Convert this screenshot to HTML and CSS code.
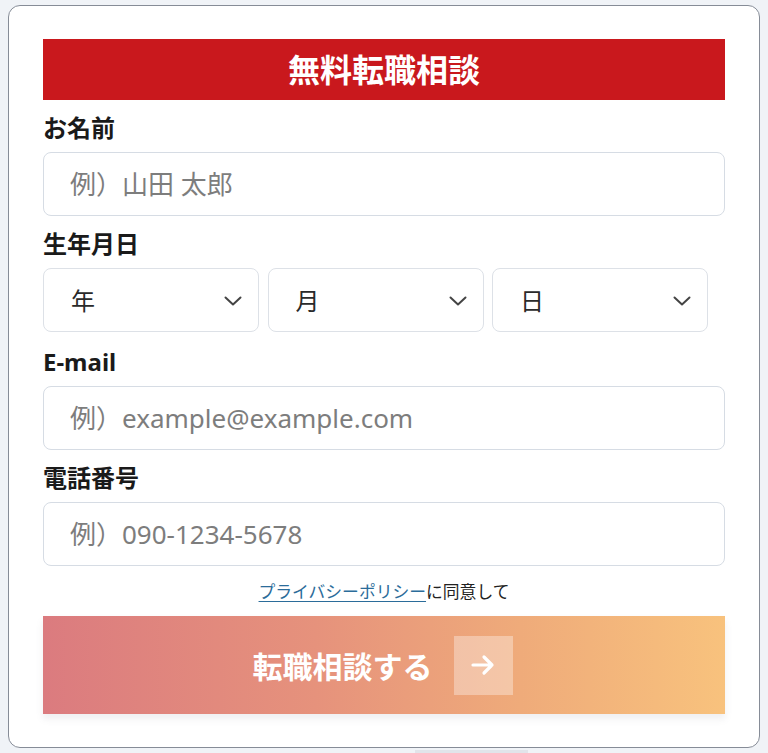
FILE: index.html
```html
<!DOCTYPE html>
<html lang="ja">
<head>
<meta charset="utf-8">
<title>無料転職相談</title>
<link rel="stylesheet" href="styles.css">
</head>
<body>
<div class="card">
  <h1 class="title">無料転職相談</h1>
  <form class="form">
    <label class="label" for="name">お名前</label>
    <input class="input" id="name" type="text" placeholder="例）山田 太郎">

    <div class="label">生年月日</div>
    <div class="selects">
      <div class="select-wrap">
        <select class="select"><option>年</option></select>
        <svg class="chev" viewBox="0 0 18 10" width="18" height="10"><path d="M1.5 1.5 L9 8.5 L16.5 1.5" fill="none" stroke="#444" stroke-width="2" stroke-linecap="round" stroke-linejoin="round"/></svg>
      </div>
      <div class="select-wrap">
        <select class="select"><option>月</option></select>
        <svg class="chev" viewBox="0 0 18 10" width="18" height="10"><path d="M1.5 1.5 L9 8.5 L16.5 1.5" fill="none" stroke="#444" stroke-width="2" stroke-linecap="round" stroke-linejoin="round"/></svg>
      </div>
      <div class="select-wrap">
        <select class="select"><option>日</option></select>
        <svg class="chev" viewBox="0 0 18 10" width="18" height="10"><path d="M1.5 1.5 L9 8.5 L16.5 1.5" fill="none" stroke="#444" stroke-width="2" stroke-linecap="round" stroke-linejoin="round"/></svg>
      </div>
    </div>

    <label class="label label-mail" for="mail">E-mail</label>
    <input class="input" id="mail" type="email" placeholder="例）example@example.com">

    <label class="label" for="tel">電話番号</label>
    <input class="input" id="tel" type="tel" placeholder="例）090-1234-5678">

    <p class="agree"><a href="#" class="agree-link">プライバシーポリシー</a>に同意して</p>

    <button type="button" class="submit">
      <span class="submit-text">転職相談する</span>
      <span class="submit-icon">
        <svg viewBox="0 0 24 22" width="24" height="22"><path d="M2 11 H21 M13 3 L21 11 L13 19" fill="none" stroke="#fff" stroke-width="3.2" stroke-linecap="round" stroke-linejoin="round"/></svg>
      </span>
    </button>
  </form>
</div>
<div class="bottom-tab"></div>
</body>
</html>
```
FILE: styles.css
```css
* { box-sizing: border-box; }
html, body { margin: 0; padding: 0; }
body {
  background: #f0f3f7;
  font-family: "Noto Sans", "Noto Sans CJK JP", sans-serif;
  color: #1a1a1a;
  height: 753px;
  overflow: hidden;
}
.card {
  margin: 5px 8px 0 8px;
  width: 752px;
  height: 743px;
  background: #fff;
  border: 1.5px solid #868c97;
  border-radius: 12px;
  padding: 33px 34px 0 34px;
}
.title {
  margin: 0;
  height: 61px;
  background: #c9181d;
  color: #fff;
  font-size: 32px;
  font-weight: 700;
  line-height: 61px;
  text-align: center;
  letter-spacing: 0;
}
.form { display: flex; flex-direction: column; }
.label {
  display: block;
  padding-top: 12px;
  margin-bottom: 8px;
  font-size: 24px;
  line-height: 32px;
  font-weight: 700;
  color: #1a1a1a;
}
.label-mail { padding-top: 14px; }
.input {
  width: 100%;
  height: 64px;
  border: 1.5px solid #d6dce4;
  border-radius: 8px;
  padding: 0 26px;
  font-family: "Noto Sans", "Noto Sans CJK JP", sans-serif;
  font-size: 26px;
  color: #333;
  background: #fff;
  outline: none;
}
.input::placeholder { color: #7d7d7d; }
.selects { display: flex; gap: 8.5px; }
.select-wrap { position: relative; width: 216px; }
.select {
  width: 100%;
  height: 64px;
  appearance: none;
  -webkit-appearance: none;
  border: 1.5px solid #dde1e7;
  border-radius: 8px;
  background: #fff;
  padding: 0 27px;
  font-family: "Noto Sans", "Noto Sans CJK JP", sans-serif;
  font-size: 24px;
  color: #2a2a2a;
  outline: none;
}
.chev {
  position: absolute;
  right: 17px;
  top: 28px;
  pointer-events: none;
}
.agree {
  margin: 14px 0 14px 0;
  text-align: center;
  font-size: 16.8px;
  line-height: 22px;
  color: #222;
  font-family: "Noto Sans CJK JP", sans-serif;
}
.agree-link { color: #2b6c9a; text-decoration: underline; text-underline-offset: 3px; }
.submit {
  height: 98px;
  border: 0;
  padding: 0;
  width: 100%;
  background: linear-gradient(90deg, #db7b7f 0%, #e6927c 40%, #efab7a 70%, #f8c27d 100%);
  box-shadow: 0 5px 7px rgba(120, 120, 140, 0.12);
  display: flex;
  align-items: center;
  justify-content: center;
  gap: 21px;
  font-family: "Noto Sans CJK JP", sans-serif;
}
.submit-text {
  color: #fff;
  font-size: 30px;
  font-weight: 700;
  line-height: 1;
  margin-left: -3px;
}
.submit-icon {
  width: 59px;
  height: 59px;
  background: rgba(255, 255, 255, 0.34);
  display: flex;
  align-items: center;
  justify-content: center;
}
.bottom-tab {
  margin: 2px 0 0 415px;
  width: 113px;
  height: 4px;
  background: #e1e4ea;
}
```
